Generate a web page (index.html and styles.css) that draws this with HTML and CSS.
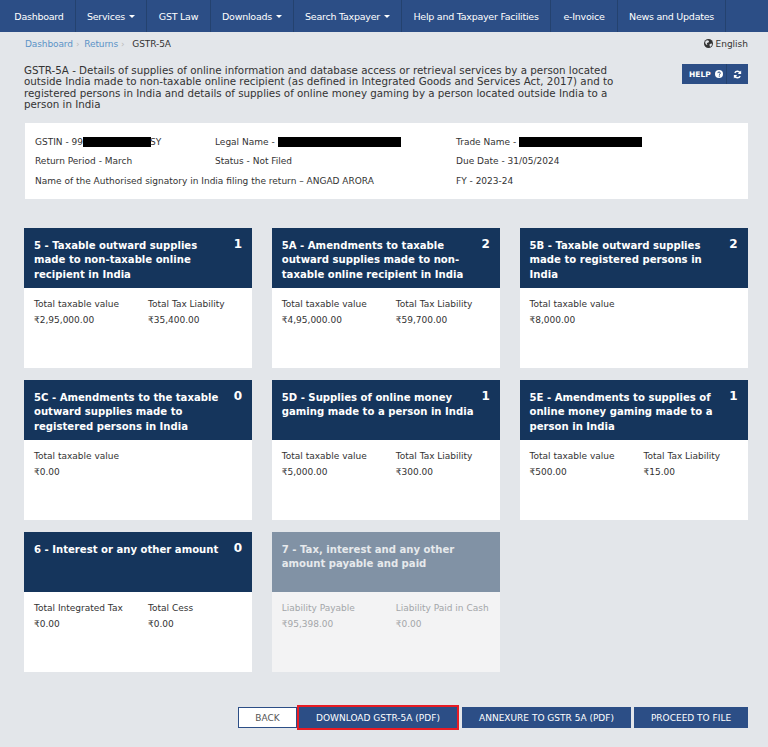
FILE: index.html
```html
<!DOCTYPE html>
<html lang="en">
<head>
    <meta charset="UTF-8">
    <meta name="viewport" content="width=device-width, initial-scale=1.0">
    <title>GSTR-5A</title>
    <link rel="stylesheet" href="styles.css">
</head>
<body>
<nav class="topnav">
    <a class="nav-item nav-dashboard">Dashboard</a>
    <a class="nav-item nav-services">Services <span class="caret"></span></a>
    <a class="nav-item nav-law">GST Law</a>
    <a class="nav-item nav-downloads">Downloads <span class="caret"></span></a>
    <a class="nav-item nav-search">Search Taxpayer <span class="caret"></span></a>
    <a class="nav-item nav-help">Help and Taxpayer Facilities</a>
    <a class="nav-item nav-invoice">e-Invoice</a>
    <a class="nav-item nav-news">News and Updates</a>
</nav>

<div class="container">
    <div class="crumb-row">
        <div class="crumbs">
            <a>Dashboard</a><span class="crumb-sep">&rsaquo;</span>
            <a>Returns</a><span class="crumb-sep">&rsaquo;</span>
            <span class="crumb-current">GSTR-5A</span>
        </div>
        <div class="lang">
            <svg class="globe" viewBox="0 0 16 16" width="9" height="9">
                <circle cx="8" cy="8" r="8" fill="#333"/>
                <path d="M3 3l4-1 2 2-1 2-3 1 1 3-2 0-2-3zM10 9l4-1 0 3-3 3-1-2z" fill="#e3e6ea"/>
            </svg>
            English
        </div>
    </div>

    <div class="title-row">
        <h1>GSTR-5A - Details of supplies of online information and database access or retrieval services by a person located outside India made to non-taxable online recipient (as defined in Integrated Goods and Services Act, 2017) and to registered persons in India and details of supplies of online money gaming by a person located outside India to a person in India</h1>
        <div class="help-box">
            <span class="help-part">HELP
                <svg viewBox="0 0 16 16" width="8" height="8">
                    <circle cx="8" cy="8" r="8" fill="#fff"/>
                    <path d="M5.5 6.2c0-3 5.2-3 5.2 0 0 1.800-2 1.700-2 3.300" fill="none" stroke="#2c4e86" stroke-width="2"/>
                    <rect x="7.600" y="11" width="2.200" height="2.200" fill="#2c4e86"/>
                </svg>
            </span>
            <span class="refresh-part">
                <svg viewBox="0 0 16 16" width="9" height="9">
                    <path d="M13 5.500A5.500 5.500 0 0 0 3.200 5M3 10.500A5.500 5.500 0 0 0 12.800 11" fill="none" stroke="#fff" stroke-width="2.600"/>
                    <path d="M14.500 1v6h-6zM1.500 15V9h6z" fill="#fff"/>
                </svg>
            </span>
        </div>
    </div>

    <div class="info-card">
        <div class="gstin">GSTIN - 99<span class="redact redact-short"></span><span class="after-redact">SY</span></div>
        <div>Legal Name - <span class="redact redact-long"></span></div>
        <div>Trade Name - <span class="redact redact-long"></span></div>
        <div>Return Period - March</div>
        <div>Status - Not Filed</div>
        <div>Due Date - 31/05/2024</div>
        <div class="span-two">Name of the Authorised signatory in India filing the return &ndash; ANGAD ARORA</div>
        <div>FY - 2023-24</div>
    </div>

    <div class="tiles">
        <div class="tile">
            <div class="tile-head"><h3>5 - Taxable outward supplies made to non-taxable online recipient in India</h3><span class="count">1</span></div>
            <div class="tile-body">
                <div class="stat"><p>Total taxable value</p><p>₹2,95,000.00</p></div>
                <div class="stat"><p>Total Tax Liability</p><p>₹35,400.00</p></div>
            </div>
        </div>
        <div class="tile">
            <div class="tile-head"><h3>5A - Amendments to taxable outward supplies made to non-taxable online recipient in India</h3><span class="count">2</span></div>
            <div class="tile-body">
                <div class="stat"><p>Total taxable value</p><p>₹4,95,000.00</p></div>
                <div class="stat"><p>Total Tax Liability</p><p>₹59,700.00</p></div>
            </div>
        </div>
        <div class="tile">
            <div class="tile-head"><h3>5B - Taxable outward supplies made to registered persons in India</h3><span class="count">2</span></div>
            <div class="tile-body">
                <div class="stat"><p>Total taxable value</p><p>₹8,000.00</p></div>
            </div>
        </div>
        <div class="tile">
            <div class="tile-head"><h3>5C - Amendments to the taxable outward supplies made to registered persons in India</h3><span class="count">0</span></div>
            <div class="tile-body">
                <div class="stat"><p>Total taxable value</p><p>₹0.00</p></div>
            </div>
        </div>
        <div class="tile">
            <div class="tile-head"><h3>5D - Supplies of online money gaming made to a person in India</h3><span class="count">1</span></div>
            <div class="tile-body">
                <div class="stat"><p>Total taxable value</p><p>₹5,000.00</p></div>
                <div class="stat"><p>Total Tax Liability</p><p>₹300.00</p></div>
            </div>
        </div>
        <div class="tile">
            <div class="tile-head"><h3>5E - Amendments to supplies of online money gaming made to a person in India</h3><span class="count">1</span></div>
            <div class="tile-body">
                <div class="stat"><p>Total taxable value</p><p>₹500.00</p></div>
                <div class="stat"><p>Total Tax Liability</p><p>₹15.00</p></div>
            </div>
        </div>
        <div class="tile">
            <div class="tile-head"><h3>6 - Interest or any other amount</h3><span class="count">0</span></div>
            <div class="tile-body">
                <div class="stat"><p>Total Integrated Tax</p><p>₹0.00</p></div>
                <div class="stat"><p>Total Cess</p><p>₹0.00</p></div>
            </div>
        </div>
        <div class="tile tile-disabled">
            <div class="tile-head"><h3>7 - Tax, interest and any other amount payable and paid</h3></div>
            <div class="tile-body">
                <div class="stat"><p>Liability Payable</p><p>₹95,398.00</p></div>
                <div class="stat"><p>Liability Paid in Cash</p><p>₹0.00</p></div>
            </div>
        </div>
    </div>

    <div class="actions">
        <button class="btn btn-back" type="button">BACK</button>
        <button class="btn btn-download" type="button">DOWNLOAD GSTR-5A (PDF)</button>
        <button class="btn btn-annexure" type="button">ANNEXURE TO GSTR 5A (PDF)</button>
        <button class="btn btn-proceed" type="button">PROCEED TO FILE</button>
    </div>
</div>
</body>
</html>
```

FILE: styles.css
```css
* {
    box-sizing: border-box;
}

html, body {
    height: 100%;
}

body {
    margin: 0;
    background-color: #e3e6ea;
    color: #333;
    font-family: 'DejaVu Sans', Verdana, sans-serif;
    font-size: 9px;
    overflow: hidden;
}

.topnav {
    display: flex;
    height: 32px;
    background-color: #2c4e86;
    color: #fff;
    font-size: 9.5px;
    letter-spacing: -0.25px;
}

.nav-item {
    display: flex;
    align-items: center;
    justify-content: center;
    gap: 4px;
    border-right: 1px solid #24426f;
    white-space: nowrap;
}

.nav-dashboard { width: 76px; padding-left: 3px; }
.nav-services { width: 71px; }
.nav-law { width: 64px; }
.nav-downloads { width: 83px; }
.nav-search { width: 108px; }
.nav-help { width: 149px; }
.nav-invoice { width: 67px; }
.nav-news { width: 108px; }

.caret {
    width: 0;
    height: 0;
    border-left: 3px solid transparent;
    border-right: 3px solid transparent;
    border-top: 3px solid #fff;
}

.container {
    padding: 0 20px 0 24px;
}

.crumb-row {
    display: flex;
    justify-content: space-between;
    align-items: center;
    height: 23px;
    padding-left: 1px;
}

.crumbs {
    letter-spacing: -0.1px;
}

.crumbs a {
    color: #5b93c7;
}

.crumb-sep {
    margin: 0 2px 0 3px;
    color: #bbb;
}

.crumb-current {
    margin-left: 3px;
}

.lang {
    display: flex;
    align-items: center;
    gap: 3px;
}

.title-row {
    display: flex;
    justify-content: space-between;
    align-items: flex-start;
    margin-top: 10px;
    height: 58px;
}

h1 {
    margin: 0;
    width: 612px;
    font-size: 10.3px;
    font-weight: normal;
    line-height: 11.3px;
    color: #333;
}

.help-box {
    display: flex;
    height: 20px;
    margin-top: -1px;
    background-color: #2c4e86;
    color: #fff;
    font-size: 7.5px;
    font-weight: bold;
}

.help-part {
    display: flex;
    align-items: center;
    gap: 4px;
    width: 45px;
    padding-left: 7px;
    border-right: 1px solid #24426f;
}

.refresh-part {
    display: flex;
    align-items: center;
    justify-content: center;
    width: 21px;
}

.info-card {
    display: grid;
    grid-template-columns: 180px 241px 1fr;
    grid-auto-rows: 19.5px;
    align-items: center;
    height: 76px;
    margin-left: 1px;
    padding: 9px 10px;
    background-color: #fff;
}

.span-two {
    grid-column: span 2;
}

.redact {
    display: inline-block;
    height: 10px;
    background-color: #000;
    vertical-align: -2px;
}

.redact-short {
    width: 68px;
}

.redact-long {
    width: 123px;
}

.after-redact {
    margin-left: -1px;
}

.tiles {
    display: grid;
    grid-template-columns: repeat(3, 228px);
    gap: 12px 19.750px;
    margin-top: 29px;
}

.tile {
    display: flex;
    flex-direction: column;
    height: 140px;
    background-color: #fff;
}

.tile-head {
    display: flex;
    justify-content: space-between;
    height: 60px;
    padding: 10.500px 10px 0;
    background-color: #15355c;
    color: #fff;
}

.tile-head h3 {
    margin: 0;
    width: 196px;
    font-size: 10.100px;
    font-weight: bold;
    line-height: 14.500px;
}

.count {
    font-size: 12px;
    font-weight: bold;
    line-height: 11px;
}

.tile-body {
    display: flex;
    padding: 11px 10px 0;
}

.stat {
    flex: none;
    width: 114px;
}

.stat p {
    margin: 0 0 5px;
    line-height: 11px;
}

.tile-disabled {
    background-color: #f3f3f4;
}

.tile-disabled .tile-head {
    background-color: #8192a5;
    color: #e6e9ec;
}

.tile-disabled .tile-body {
    color: #a3a6a9;
}

.actions {
    display: flex;
    align-items: center;
    justify-content: flex-end;
    margin-top: 33px;
}

.btn {
    height: 21px;
    padding: 0;
    border: 1px solid #2c4e86;
    background-color: #2c4e86;
    color: #fff;
    font-family: inherit;
    font-size: 9px;
}

.btn-back {
    width: 59px;
    background-color: #fff;
    color: #555;
}

.btn-download {
    width: 162px;
    height: 25px;
    margin-right: 3px;
    border: 2px solid #e81c24;
}

.btn-annexure {
    width: 169px;
    margin-right: 3px;
}

.btn-proceed {
    width: 114px;
}
```
